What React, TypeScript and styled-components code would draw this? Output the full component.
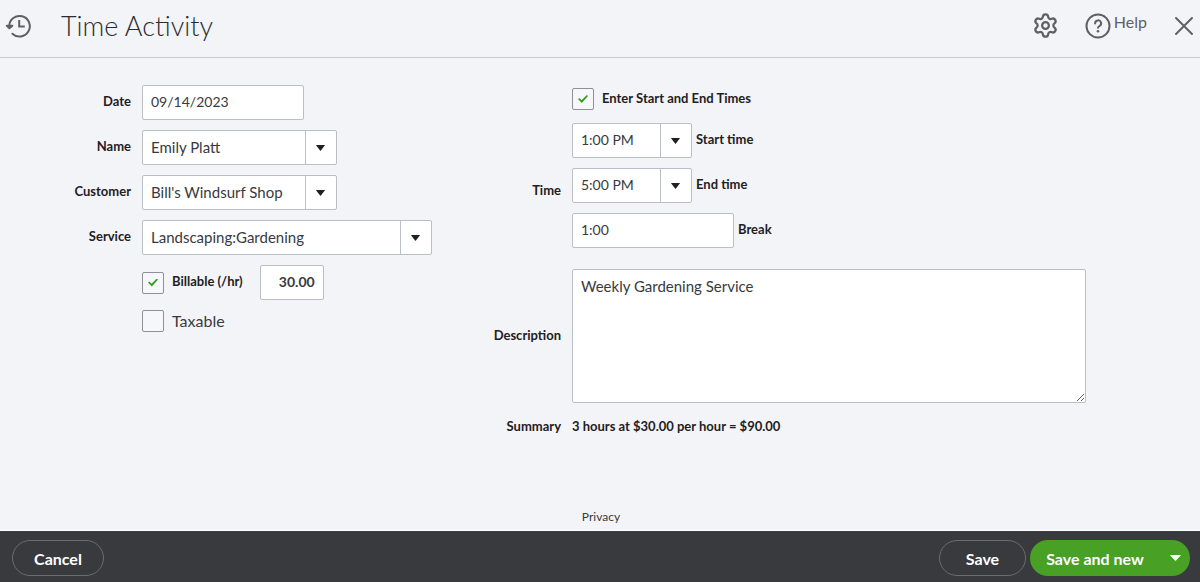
import React from "react";
import styled, { createGlobalStyle } from "styled-components";
import { Settings } from "lucide-react";

const GlobalStyle = createGlobalStyle`
  *, *::before, *::after { box-sizing: border-box; }
  body { margin: 0; background: #f3f4f8; }
  button, input, select, textarea { font-family: inherit; color: inherit; margin: 0; }
`;

const Page = styled.div`
  display: flex;
  flex-direction: column;
  min-height: 100vh;
  background: #f3f4f8;
  color: #393a3d;
  font-family: Lato, "Liberation Sans", sans-serif;
  font-size: 15px;
  line-height: 20px;
`;

const Header = styled.header`
  display: flex;
  align-items: center;
  height: 58px;
  padding: 0 6px 6px 5px;
  border-bottom: 1px solid #c9cbc9;
`;

const Title = styled.h1`
  flex: 1;
  margin: 0 0 0 28px;
  font-size: 27px;
  font-weight: 300;
  line-height: 36px;
  color: #2b2c2f;
`;

const IconButton = styled.button`
  display: flex;
  align-items: center;
  padding: 0;
  border: 0;
  background: none;
  color: #5f6066;
  font-size: 16px;
  line-height: 20px;
  cursor: pointer;
`;

const HeaderActions = styled.div`
  display: flex;
  align-items: center;
  gap: 26px;
`;

const HelpText = styled.span`
  padding: 0 1px 8px 3px;
`;

const Form = styled.form`
  display: flex;
  flex: 1;
  flex-direction: column;
`;

const Columns = styled.div`
  display: grid;
  grid-template-columns: 433px minmax(0, 1fr);
  gap: 39px;
  padding: 27px 114px 24px 0;
`;

const Column = styled.div`
  display: flex;
  flex-direction: column;
  gap: 10px;
`;

const Row = styled.div<{ $label: number; $space?: number }>`
  display: grid;
  grid-template-columns: ${(p) => p.$label}px minmax(0, 1fr);
  column-gap: 11px;
  align-items: center;
  margin-top: ${(p) => p.$space ?? 0}px;
`;

const Label = styled.label<{ $end?: boolean }>`
  padding-bottom: 3px;
  color: #1f2023;
  font-size: 13px;
  font-weight: 700;
  text-align: ${(p) => (p.$end ? "right" : "left")};
`;

const GroupLabel = styled(Label)`
  padding: 8px 0 0;
`;

const Group = styled.div`
  display: flex;
  align-items: center;
  gap: 4px;
`;

const TickRow = styled.div<{ $tall?: boolean }>`
  display: flex;
  align-items: center;
  gap: 8px;
  height: ${(p) => (p.$tall ? 35 : 22)}px;
`;

const TextInput = styled.input<{ $width: number; $amount?: boolean }>`
  width: ${(p) => p.$width}px;
  height: 35px;
  padding: 0 8px 2px;
  border: 1px solid #babec5;
  border-radius: 2px;
  background: #fff;
  font-size: 14px;
  font-weight: ${(p) => (p.$amount ? 700 : 400)};
  text-align: ${(p) => (p.$amount ? "right" : "left")};
  margin-left: ${(p) => (p.$amount ? 9 : 0)}px;
`;

const SelectBox = styled.div<{ $width: number }>`
  position: relative;
  width: ${(p) => p.$width}px;
  height: 35px;
`;

const Select = styled.select<{ $numeric?: boolean }>`
  width: 100%;
  height: 100%;
  padding: 0 36px 2px 8px;
  border: 1px solid #babec5;
  border-radius: 2px;
  background: #fff;
  font-size: ${(p) => (p.$numeric ? 14 : 15)}px;
  appearance: none;
`;

const SelectArrow = styled.span`
  position: absolute;
  top: 1px;
  right: 1px;
  bottom: 1px;
  display: flex;
  align-items: center;
  justify-content: center;
  width: 31px;
  padding-right: 1px;
  border-left: 1px solid #babec5;
  color: #1f2023;
  pointer-events: none;
`;

const tickShape = "polygon(0 50%, 12% 36%, 36% 66%, 88% 0, 100% 12%, 38% 100%)";

const Tick = styled.input`
  display: grid;
  place-content: center;
  width: 22px;
  height: 22px;
  border: 1px solid #8d9096;
  border-radius: 2px;
  background: #f6f7fa;
  appearance: none;

  &:checked::before {
    content: "";
    width: 10px;
    height: 8px;
    background: #2ca01c;
    clip-path: ${tickShape};
  }
`;

const PlainLabel = styled.label`
  color: #393a3d;
  font-size: 16px;
`;

const TextArea = styled.textarea`
  display: block;
  width: 100%;
  height: 134px;
  padding: 6px 8px;
  border: 1px solid #babec5;
  border-radius: 2px;
  background: #fff;
  font-size: 15px;
  line-height: 20px;
  resize: both;
`;

const Privacy = styled.a`
  align-self: center;
  margin-top: auto;
  padding: 0 0 3px 2px;
  color: #393a3d;
  font-size: 12px;
  text-decoration: none;
`;

const Footer = styled.footer`
  display: flex;
  align-items: center;
  gap: 4px;
  height: 52px;
  padding: 3px 10px 0 12px;
  border-top: 1px solid #fff;
  background: #393a3d;
`;

const OutlineButton = styled.button<{ $width: number; $first?: boolean }>`
  width: ${(p) => p.$width}px;
  height: 36px;
  margin-right: ${(p) => (p.$first ? "auto" : 0)};
  border: 1px solid #6b6c72;
  border-radius: 18px;
  background: transparent;
  color: #fff;
  font-size: 16px;
  font-weight: 700;
`;

const SplitButton = styled.div`
  display: flex;
  height: 36px;
  border-radius: 18px;
  background: #48a025;
  overflow: hidden;
`;

const SplitPart = styled.button<{ $width: number }>`
  display: flex;
  align-items: center;
  justify-content: center;
  width: ${(p) => p.$width}px;
  padding: 0;
  border: 0;
  background: transparent;
  color: #fff;
  font-size: 16px;
  font-weight: 700;
`;

function Caret({ width = 9, height = 6 }: { width?: number; height?: number }) {
  return (
    <svg width={width} height={height} viewBox="0 0 10 6" preserveAspectRatio="none" aria-hidden="true">
      <path d="M.5 0h9q.7 0 .2.6L5.500 5.600q-.5.5-1 0L.3.6Q-.2 0 .5 0z" fill="currentColor" />
    </svg>
  );
}

function HistoryIcon() {
  return (
    <svg width="28" height="26" viewBox="0 0 28 26" fill="none" stroke="currentColor" strokeWidth="2" strokeLinecap="round" strokeLinejoin="round">
      <path d="M4.200 13A10.300 10.300 0 1 1 7.400 20.700" />
      <path d="M1.800 12.800l2.600 2.400 3-2.400z" fill="currentColor" />
      <path d="M14.200 8v5.500h4.600" strokeLinecap="square" strokeLinejoin="miter" />
    </svg>
  );
}

function HelpIcon() {
  return (
    <svg width="26" height="26" viewBox="0 0 26 26" fill="none" stroke="currentColor" strokeWidth="2" strokeLinecap="round">
      <circle cx="13" cy="13" r="11.500" />
      <path d="M10.100 10.400a3 3 0 1 1 4.400 2.600c-1 .6-1.500 1-1.500 1.800" />
      <circle cx="13" cy="18.300" r="1.300" fill="currentColor" stroke="none" />
    </svg>
  );
}

function CloseIcon() {
  return (
    <svg width="20" height="20" viewBox="0 0 20 20" fill="none" stroke="currentColor" strokeWidth="2" strokeLinecap="round">
      <path d="M2 2l16 16M18 2L2 18" />
    </svg>
  );
}

interface SelectFieldProps {
  id: string;
  width: number;
  value: string;
  numeric?: boolean;
}

function SelectField({ id, width, value, numeric }: SelectFieldProps) {
  return (
    <SelectBox $width={width}>
      <Select id={id} defaultValue={value} $numeric={numeric}>
        <option>{value}</option>
      </Select>
      <SelectArrow>
        <Caret />
      </SelectArrow>
    </SelectBox>
  );
}

export default function App() {
  return (
    <Page>
      <GlobalStyle />
      <Header>
        <IconButton type="button" aria-label="Recent activity">
          <HistoryIcon />
        </IconButton>
        <Title>Time Activity</Title>
        <HeaderActions>
          <IconButton type="button" aria-label="Settings">
            <Settings size={27} strokeWidth={2} />
          </IconButton>
          <IconButton type="button">
            <HelpIcon />
            <HelpText>Help</HelpText>
          </IconButton>
          <IconButton type="button" aria-label="Close">
            <CloseIcon />
          </IconButton>
        </HeaderActions>
      </Header>
      <Form onSubmit={(e) => e.preventDefault()}>
        <Columns>
          <Column>
            <Row $label={131}>
              <Label $end htmlFor="date">Date</Label>
              <TextInput id="date" $width={162} defaultValue="09/14/2023" />
            </Row>
            <Row $label={131}>
              <Label $end htmlFor="name">Name</Label>
              <SelectField id="name" width={195} value="Emily Platt" />
            </Row>
            <Row $label={131}>
              <Label $end htmlFor="customer">Customer</Label>
              <SelectField id="customer" width={195} value="Bill's Windsurf Shop" />
            </Row>
            <Row $label={131}>
              <Label $end htmlFor="service">Service</Label>
              <SelectField id="service" width={290} value="Landscaping:Gardening" />
            </Row>
            <Row $label={131}>
              <span />
              <TickRow $tall>
                <Tick type="checkbox" id="billable" defaultChecked />
                <Label htmlFor="billable">Billable (/hr)</Label>
                <TextInput $width={64} $amount aria-label="Hourly rate" defaultValue="30.00" />
              </TickRow>
            </Row>
            <Row $label={131}>
              <span />
              <TickRow>
                <Tick type="checkbox" id="taxable" />
                <PlainLabel htmlFor="taxable">Taxable</PlainLabel>
              </TickRow>
            </Row>
          </Column>
          <Column>
            <Row $label={89} $space={3}>
              <span />
              <TickRow>
                <Tick type="checkbox" id="range" defaultChecked />
                <Label htmlFor="range">Enter Start and End Times</Label>
              </TickRow>
            </Row>
            <Row $label={89} $space={3}>
              <GroupLabel $end as="span">Time</GroupLabel>
              <Column>
                <Group>
                  <SelectField id="start" width={120} value="1:00 PM" numeric />
                  <Label htmlFor="start">Start time</Label>
                </Group>
                <Group>
                  <SelectField id="end" width={120} value="5:00 PM" numeric />
                  <Label htmlFor="end">End time</Label>
                </Group>
                <Group>
                  <TextInput id="break" $width={162} defaultValue="1:00" />
                  <Label htmlFor="break">Break</Label>
                </Group>
              </Column>
            </Row>
            <Row $label={89} $space={11}>
              <Label $end htmlFor="description">Description</Label>
              <TextArea id="description" defaultValue="Weekly Gardening Service" />
            </Row>
            <Row $label={89} $space={3}>
              <Label $end as="span">Summary</Label>
              <Label as="output">3 hours at $30.00 per hour = $90.00</Label>
            </Row>
          </Column>
        </Columns>
        <Privacy href="#privacy">Privacy</Privacy>
        <Footer>
          <OutlineButton type="button" $width={92} $first>Cancel</OutlineButton>
          <OutlineButton type="submit" $width={87}>Save</OutlineButton>
          <SplitButton>
            <SplitPart type="submit" $width={130}>Save and new</SplitPart>
            <SplitPart type="button" $width={30} aria-label="More save options">
              <Caret width={11} height={6} />
            </SplitPart>
          </SplitButton>
        </Footer>
      </Form>
    </Page>
  );
}
